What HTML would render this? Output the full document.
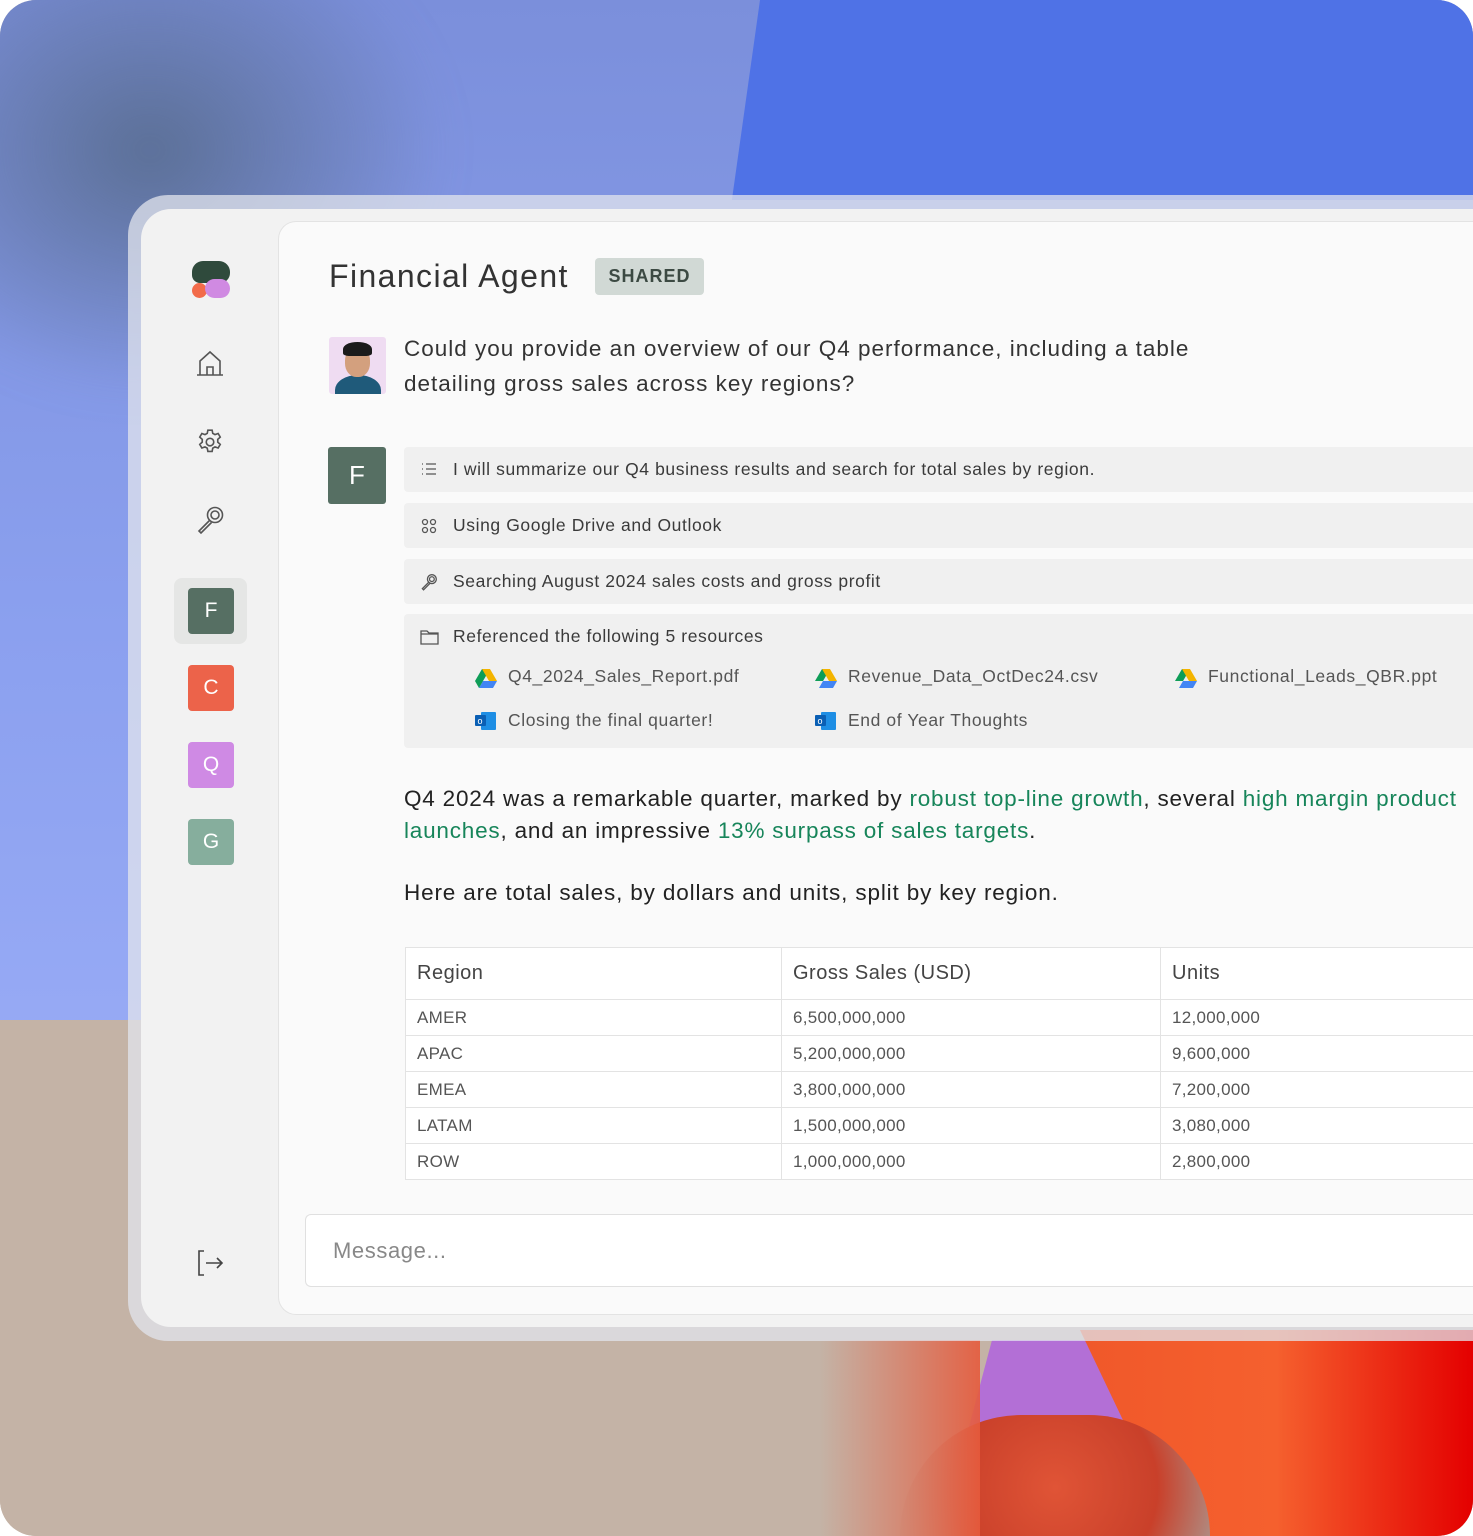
<!DOCTYPE html>
<html><head><meta charset="utf-8"><style>
*{margin:0;padding:0;box-sizing:border-box}
html,body{width:1473px;height:1536px;overflow:hidden}
body{background:#fff;font-family:"Liberation Sans",sans-serif;color:#333;position:relative}
#bg{position:absolute;left:0;top:0;width:1473px;height:1536px;border-radius:36px;overflow:hidden;background:#c4b3a6}
.b{position:absolute}
#frame{position:absolute;left:128px;top:195px;width:1345px;height:1146px;border-radius:40px 0 0 40px;background:rgba(225,228,236,.75)}
#panel{position:absolute;left:141px;top:209px;width:1332px;height:1118px;border-radius:30px 0 0 30px;background:#f2f2f2}
#main{position:absolute;left:278px;top:221px;width:1195px;height:1094px;border-radius:18px 0 0 18px;background:#fafafa;border:1.5px solid #e3e3e3;border-right:none}
.t{position:absolute;white-space:nowrap}
.av{position:absolute;left:188px;width:46px;height:46px;border-radius:4px;color:#fff;font-size:21px;text-align:center;line-height:46px}
.step{position:absolute;left:404px;width:1069px;background:#f0f0f0;border-radius:4px 0 0 4px;font-size:17.5px;color:#3a3a3a;letter-spacing:.6px;overflow:hidden}
.g{color:#17855a}
#tw{position:absolute;left:405px;top:947px;width:1068px;overflow:hidden}
table{width:1100px;border-collapse:collapse;background:#fff;font-size:17px;color:#555;letter-spacing:.3px}
td{border:1.5px solid #e3e3e3;padding:0 11px;height:36px}
tr:first-child td{height:52px;font-size:20px;color:#444;letter-spacing:.5px}
</style></head><body>
<div id="bg">
 <div class="b" style="left:0;top:0;width:1473px;height:1050px;background:linear-gradient(180deg,#7b8fdb 0%,#8ba0ef 60%,#97aaf5 100%)"></div>
 <div class="b" style="left:-150px;top:-100px;width:600px;height:500px;border-radius:50%;background:radial-gradient(#5b6f95,rgba(91,111,149,0) 70%);filter:blur(20px)"></div>
 <div class="b" style="left:760px;top:0;width:800px;height:200px;background:#4f72e6;transform:skewX(-8deg);transform-origin:top left"></div>
 <div class="b" style="left:0;top:1020px;width:1473px;height:516px;background:#c4b3a6"></div>
 <div class="b" style="left:940px;top:1340px;width:260px;height:196px;background:#b36fd6;clip-path:polygon(20% 0,100% 0,80% 100%,0 100%)"></div>
 <div class="b" style="left:1080px;top:1330px;width:393px;height:206px;background:linear-gradient(90deg,#f0582a,#f5602e 50%,#e40000 100%);clip-path:polygon(0 0,100% 0,100% 100%,25% 100%)"></div>
 <div class="b" style="left:900px;top:1415px;width:310px;height:121px;border-radius:155px 155px 0 0;background:radial-gradient(circle at 50% 60%,#e05436,#c9402a 60%,#b08a80 95%)"></div>
 <div class="b" style="left:820px;top:1340px;width:160px;height:196px;background:linear-gradient(90deg,rgba(196,179,166,1),rgba(230,90,60,.9))"></div>
</div>
<div id="frame"></div>
<div id="panel"></div>
<div id="main"></div>

<div class="b" style="left:192px;top:261px;width:38px;height:22px;border-radius:11px 11px 10px 8px;background:#2f4a3c"></div>
<div class="b" style="left:192px;top:283px;width:15px;height:15px;border-radius:50%;background:#f26b4a"></div>
<div class="b" style="left:205px;top:279px;width:25px;height:19px;border-radius:10px;background:#d08ae2"></div>
<svg class="b" style="left:194px;top:347px" width="32" height="32" viewBox="0 0 32 32" fill="none" stroke="#555" stroke-width="1.6"><path d="M3 28h26M6 28V14L16 5l10 9v14M13 28v-8h6v8"/></svg>
<svg class="b" style="left:195px;top:427px" width="30" height="30" viewBox="0 0 24 24" fill="none" stroke="#555" stroke-width="1.3"><circle cx="12" cy="12" r="3"/><path d="M10.3 2.5h3.4l.5 2.6 1.8 1 2.5-.9 1.7 2.9-2 1.8v2.2l2 1.8-1.7 2.9-2.5-.9-1.8 1-.5 2.6h-3.4l-.5-2.6-1.8-1-2.5.9-1.7-2.9 2-1.8v-2.2l-2-1.8 1.7-2.9 2.5.9 1.8-1z"/></svg>
<svg class="b" style="left:195px;top:503px" width="32" height="32" viewBox="0 0 32 32" fill="none" stroke="#555" stroke-width="1.6"><circle cx="20" cy="12" r="7.5"/><circle cx="20" cy="12" r="4"/><path d="M14.5 17.5L4 28l2 2 10.5-10.5"/></svg>
<svg class="b" style="left:196px;top:1249px" width="30" height="28" viewBox="0 0 30 28" fill="none" stroke="#444" stroke-width="1.6"><path d="M8 2H3v24h5M10 14h16M21 9l5 5-5 5"/></svg>
<div class="b" style="left:174px;top:578px;width:73px;height:66px;border-radius:8px;background:#e5e6e5"></div>
<div class="av" style="top:588px;background:#566f63">F</div>
<div class="av" style="top:665px;background:#ec634a">C</div>
<div class="av" style="top:742px;background:#cf8ae4">Q</div>
<div class="av" style="top:819px;background:#86ae9d">G</div>

<div class="t" style="left:329px;top:258px;font-size:32px;color:#333;letter-spacing:1.4px">Financial Agent</div>
<div class="b" style="left:595px;top:258px;width:109px;height:37px;border-radius:4px;background:#d1d9d5;color:#3c4a43;font-weight:bold;font-size:18px;letter-spacing:1px;text-align:center;line-height:37px">SHARED</div>

<div class="b" style="left:329px;top:337px;width:57px;height:57px;border-radius:3px;background:#efdcf2;overflow:hidden">
 <div class="b" style="left:6px;top:38px;width:46px;height:30px;border-radius:50% 50% 0 0;background:#1f5a7a"></div>
 <div class="b" style="left:16px;top:10px;width:25px;height:30px;border-radius:45%;background:#d3a07e"></div>
 <div class="b" style="left:14px;top:5px;width:29px;height:14px;border-radius:50% 50% 20% 20%;background:#1b1b1b"></div>
</div>
<div class="t" style="left:404px;top:331px;font-size:22.5px;line-height:35px;color:#333;letter-spacing:1px">Could you provide an overview of our Q4 performance, including a table<br>detailing gross sales across key regions?</div>

<div class="b" style="left:328px;top:447px;width:58px;height:57px;border-radius:3px;background:#566f63;color:#fff;font-size:26px;text-align:center;line-height:57px">F</div>

<div class="step" style="top:447px;height:45px"><svg class="b" style="left:17px;top:15px" width="16" height="14" viewBox="0 0 16 14" fill="none" stroke="#555" stroke-width="1.3"><path d="M1 2h1M1 7h1M1 12h1M5 2h10M5 7h10M5 12h10"/></svg><span class="t" style="left:49px;top:12px">I will summarize our Q4 business results and search for total sales by region.</span></div>
<div class="step" style="top:503px;height:45px"><svg class="b" style="left:17px;top:15px" width="16" height="16" viewBox="0 0 16 16" fill="none" stroke="#555" stroke-width="1.3"><circle cx="4" cy="4" r="2.5"/><circle cx="12" cy="4" r="2.5"/><circle cx="4" cy="12" r="2.5"/><circle cx="12" cy="12" r="2.5"/></svg><span class="t" style="left:49px;top:12px">Using Google Drive and Outlook</span></div>
<div class="step" style="top:559px;height:45px"><svg class="b" style="left:16px;top:13px" width="19" height="19" viewBox="0 0 32 32" fill="none" stroke="#555" stroke-width="2.2"><circle cx="20" cy="12" r="7.5"/><circle cx="20" cy="12" r="4"/><path d="M14.5 17.5L4 28l2 2 10.5-10.5"/></svg><span class="t" style="left:49px;top:12px">Searching August 2024 sales costs and gross profit</span></div>
<div class="step" style="top:614px;height:134px"><svg class="b" style="left:16px;top:15px" width="19" height="16" viewBox="0 0 19 16" fill="none" stroke="#555" stroke-width="1.3"><path d="M1 2h6l2 2h9v11H1z M1 5h17"/></svg><span class="t" style="left:49px;top:12px">Referenced the following 5 resources</span>
 <span class="t" style="left:104px;top:52px;color:#555">Q4_2024_Sales_Report.pdf</span>
 <span class="t" style="left:444px;top:52px;color:#555">Revenue_Data_OctDec24.csv</span>
 <span class="t" style="left:804px;top:52px;color:#555">Functional_Leads_QBR.ppt</span>
 <span class="t" style="left:104px;top:96px;color:#555">Closing the final quarter!</span>
 <span class="t" style="left:444px;top:96px;color:#555">End of Year Thoughts</span>
 <svg class="b" style="left:71px;top:55px" width="22" height="19" viewBox="0 0 22 19"><path d="M7 0h8L8 12H0z" fill="#0f9d58"/><path d="M7 0h8l7 12h-8z" fill="#f4b400"/><path d="M4 19l4-7h14l-4 7z" fill="#4285f4"/><path d="M0 12h8l-4 7z" fill="#0f9d58"/></svg>
 <svg class="b" style="left:411px;top:55px" width="22" height="19" viewBox="0 0 22 19"><path d="M7 0h8L8 12H0z" fill="#0f9d58"/><path d="M7 0h8l7 12h-8z" fill="#f4b400"/><path d="M4 19l4-7h14l-4 7z" fill="#4285f4"/></svg>
 <svg class="b" style="left:771px;top:55px" width="22" height="19" viewBox="0 0 22 19"><path d="M7 0h8L8 12H0z" fill="#0f9d58"/><path d="M7 0h8l7 12h-8z" fill="#f4b400"/><path d="M4 19l4-7h14l-4 7z" fill="#4285f4"/></svg>
 <svg class="b" style="left:71px;top:97px" width="22" height="20" viewBox="0 0 22 20"><rect x="6" y="1" width="15" height="18" rx="1" fill="#1e8ee4"/><rect x="0" y="4" width="11" height="11" rx="1" fill="#0a5fb4"/><text x="2.5" y="13" font-size="9" fill="#fff" font-family="Liberation Sans">o</text></svg>
 <svg class="b" style="left:411px;top:97px" width="22" height="20" viewBox="0 0 22 20"><rect x="6" y="1" width="15" height="18" rx="1" fill="#1e8ee4"/><rect x="0" y="4" width="11" height="11" rx="1" fill="#0a5fb4"/><text x="2.5" y="13" font-size="9" fill="#fff" font-family="Liberation Sans">o</text></svg>
</div>

<div class="t" style="left:404px;top:783px;font-size:22.5px;line-height:32px;color:#222;letter-spacing:.8px">Q4 2024 was a remarkable quarter, marked by <span class="g">robust top-line growth</span>, several <span class="g">high margin product</span><br><span class="g">launches</span>, and an impressive <span class="g">13% surpass of sales targets</span>.</div>
<div class="t" style="left:404px;top:880px;font-size:22.5px;color:#222;letter-spacing:.85px">Here are total sales, by dollars and units, split by key region.</div>

<div id="tw"><table>
<tr><td style="width:376px">Region</td><td style="width:379px">Gross Sales (USD)</td><td>Units</td></tr>
<tr><td>AMER</td><td>6,500,000,000</td><td>12,000,000</td></tr>
<tr><td>APAC</td><td>5,200,000,000</td><td>9,600,000</td></tr>
<tr><td>EMEA</td><td>3,800,000,000</td><td>7,200,000</td></tr>
<tr><td>LATAM</td><td>1,500,000,000</td><td>3,080,000</td></tr>
<tr><td>ROW</td><td>1,000,000,000</td><td>2,800,000</td></tr>
</table></div>

<div class="b" style="left:305px;top:1214px;width:1168px;height:73px;border-radius:6px 0 0 6px;background:#fff;border:1.5px solid #e0e0e0;border-right:none"></div>
<div class="t" style="left:333px;top:1238px;font-size:22px;color:#888;letter-spacing:.6px">Message...</div>
</body></html>
